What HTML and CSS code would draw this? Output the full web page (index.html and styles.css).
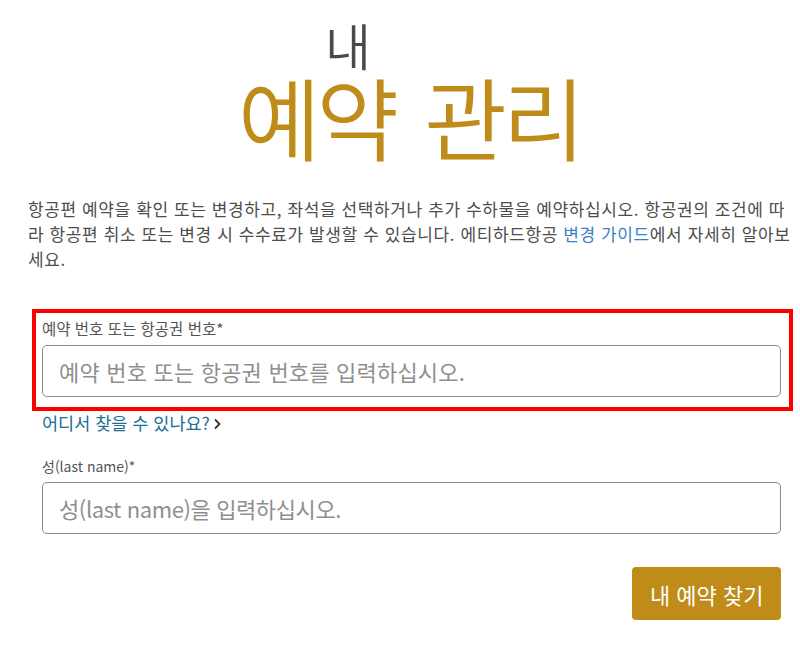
FILE: index.html
```html
<!DOCTYPE html>
<html lang="ko">
<head>
<meta charset="utf-8">
<title>내 예약 관리</title>
<link rel="stylesheet" href="styles.css">
</head>
<body>
<main class="page">
  <h1 class="title">
    <span class="title-small">내</span>
    <span class="title-big">예약 관리</span>
  </h1>
  <p class="intro">항공편 예약을 확인 또는 변경하고, 좌석을 선택하거나 추가 수하물을 예약하십시오. 항공권의 조건에 따라 항공편 취소 또는 변경 시 수수료가 발생할 수 있습니다. 에티하드항공 <a class="intro-link" href="#">변경 가이드</a>에서 자세히 알아보세요.</p>
  <form class="form">
    <div class="highlight">
      <label class="label" for="pnr">예약 번호 또는 항공권 번호*</label>
      <input class="field" id="pnr" type="text" placeholder="예약 번호 또는 항공권 번호를 입력하십시오.">
    </div>
    <a class="help" href="#">어디서 찾을 수 있나요?<svg class="chev" width="9" height="12" viewBox="0 0 9 12"><path d="M2 1.5 L6.5 6 L2 10.5" fill="none" stroke="#333" stroke-width="1.8"/></svg></a>
    <label class="label label-2" for="lname">성(last name)*</label>
    <input class="field field-2" id="lname" type="text" placeholder="성(last name)을 입력하십시오.">
    <div class="actions">
      <button class="btn" type="button">내 예약 찾기</button>
    </div>
  </form>
</main>
</body>
</html>
```
FILE: styles.css
```css
html, body {
  margin: 0;
  padding: 0;
  background: #fff;
}
body {
  font-family: "Noto Sans CJK KR", "Noto Sans", sans-serif;
  color: #4d4d4d;
}
.page {
  width: 800px;
  box-sizing: border-box;
}
.title {
  margin: 0;
  padding-top: 19px;
  font-weight: 350;
  display: flex;
  flex-direction: column;
}
.title-small {
  display: block;
  font-size: 50px;
  line-height: 50px;
  height: 51px;
  color: #4a4a4a;
  padding-left: 325px;
}
.title-big {
  display: block;
  font-size: 90px;
  line-height: 90px;
  letter-spacing: -4.5px;
  word-spacing: 9px;
  color: #bf8b19;
  padding-left: 238px;
}
.intro {
  margin: 36px 0 0;
  padding: 0 3px 0 28px;
  font-size: 17px;
  line-height: 25px;
  letter-spacing: 0.6px;
  color: #4d4d4d;
}
.intro-link {
  color: #3b80c3;
  text-decoration: none;
}
.form {
  margin: 38px 0 0;
  padding: 0 19px 0 42px;
  display: flex;
  flex-direction: column;
}
.highlight {
  margin: 0 -12px 0 -10px;
  border: 4px solid #ff0000;
  padding: 5px 8px 10px 6px;
  display: flex;
  flex-direction: column;
}
.label {
  display: block;
  font-size: 15.5px;
  line-height: 20px;
  color: #555;
  margin-bottom: 7px;
}
.label-2 {
  font-size: 14px;
  margin-top: 22px;
  margin-bottom: 6px;
}
.field {
  box-sizing: border-box;
  width: 100%;
  height: 52px;
  border: 1px solid #8a8a8a;
  border-radius: 5px;
  padding: 0 16px;
  font-family: "Noto Sans CJK KR", "Noto Sans", sans-serif;
  font-size: 22px;
  letter-spacing: 0.2px;
  color: #333;
  background: #fff;
  margin: 0;
}
.field-2 {
  letter-spacing: -0.4px;
}
.field::placeholder {
  color: #8f8f8f;
}
.help {
  display: flex;
  align-items: center;
  margin-top: 1px;
  font-size: 17.5px;
  line-height: 22px;
  color: #1d6e92;
  text-decoration: none;
}
.chev {
  margin-left: 3px;
  margin-top: 2px;
}
.actions {
  display: flex;
  justify-content: flex-end;
  margin-top: 33px;
}
.btn {
  height: 53px;
  padding: 0 17.5px;
  border: none;
  border-radius: 4px;
  background: #bf8b19;
  color: #fff;
  font-family: "Noto Sans CJK KR", "Noto Sans", sans-serif;
  font-size: 22px;
  letter-spacing: 0;
  cursor: pointer;
}
```
